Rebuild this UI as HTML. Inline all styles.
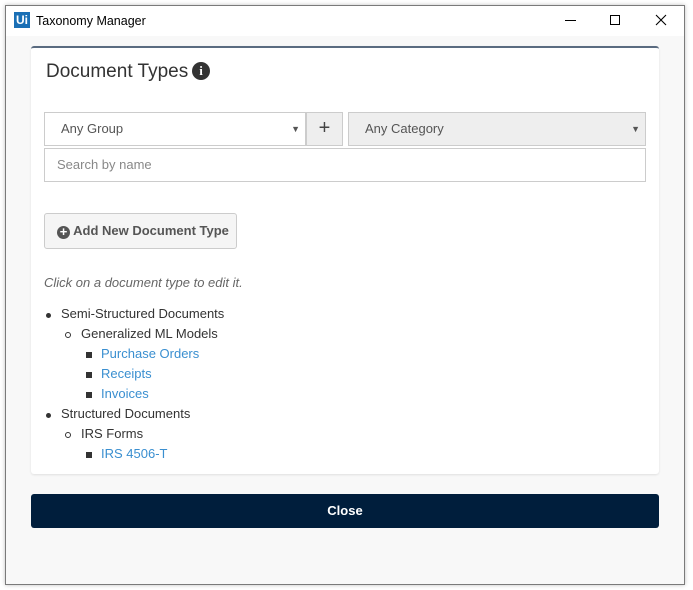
<!DOCTYPE html>
<html><head><style>
*{box-sizing:border-box;margin:0;padding:0}
body{width:693px;height:590px;background:#fff;position:relative;font-family:"Liberation Sans",sans-serif;overflow:hidden}
.win{position:absolute;left:5px;top:5px;width:680px;height:580px;border:1px solid #7a7a7a;background:#f8f8f8;box-shadow:0 0 4px rgba(0,0,0,.25)}
.title{position:absolute;left:0;top:0;width:678px;height:30px;background:#fff}
.logo{position:absolute;left:8px;top:6px;width:16px;height:16px;background:#1a6fb5;color:#fff;font-size:12px;font-weight:bold;line-height:16px;text-align:center}
.ttext{position:absolute;left:30px;top:8px;font-size:12.5px;color:#000}
.card{position:absolute;left:25px;top:40px;width:628px;height:428px;background:#fff;border-top:2px solid #5a6b80;border-radius:3px;box-shadow:0 1px 2px rgba(0,0,0,.1)}
.abs{position:absolute}
.inp{border:1px solid #ccc;font-size:13px;color:#555;padding-left:16px;line-height:32px}
.list{font-size:13px;color:#222;line-height:20px}
.a{color:#3a8fd0}
.sq{position:absolute;width:6px;height:6px;background:#333}
.h{color:#333}
</style></head><body>
<div class="win">
 <div class="title"><div class="logo">Ui</div><div class="ttext">Taxonomy Manager</div>
  <div class="abs" style="left:559px;top:14px;width:11px;height:1px;background:#000"></div>
  <div class="abs" style="left:604px;top:9px;width:10px;height:10px;border:1px solid #000"></div>
  <svg class="abs" style="left:649px;top:8px" width="12" height="12"><path d="M1 1L11 11M11 1L1 11" stroke="#000" stroke-width="1.1"/></svg>
 </div>
 <div class="card">
  <div class="abs" style="left:15px;top:13px;font-size:19px;color:#333">Document Types</div>
  <div class="abs" style="left:161px;top:14px;width:18px;height:18px;border-radius:50%;background:#333;color:#fff;font:bold 13px 'Liberation Serif',serif;text-align:center;line-height:18px">i</div>
  <div class="abs inp" style="left:13px;top:64px;width:262px;height:34px">Any Group<span class="abs" style="right:5px;top:0;font-size:9px;color:#555">▼</span></div>
  <div class="abs" style="left:275px;top:64px;width:37px;height:34px;border:1px solid #ccc;background:#eee;font-size:20px;color:#444;text-align:center;line-height:30px">+</div>
  <div class="abs inp" style="left:317px;top:64px;width:298px;height:34px;background:#eee">Any Category<span class="abs" style="right:5px;top:0;font-size:9px;color:#555">▼</span></div>
  <div class="abs inp" style="left:13px;top:100px;width:602px;height:34px;color:#888;padding-left:12px">Search by name</div>
  <div class="abs" style="left:13px;top:165px;width:193px;height:36px;border:1px solid #ccc;border-radius:3px;background:#f5f5f5;font-size:13px;font-weight:bold;color:#555;line-height:34px;padding-left:12px"><span style="display:inline-block;width:13px;height:13px;border-radius:50%;background:#555;color:#fff;font-size:13px;line-height:12px;text-align:center;vertical-align:-1px">+</span> Add New Document Type</div>
  <div class="abs" style="left:13px;top:227px;font-size:13px;font-style:italic;color:#666">Click on a document type to edit it.</div>
  <div class="abs list" style="left:0;top:256px;width:400px;height:160px">
   <div class="abs" style="left:15px;top:9px;width:5px;height:5px;border-radius:50%;background:#333"></div><div class="abs h" style="left:30px;top:0">Semi-Structured Documents</div>
   <div class="abs" style="left:34px;top:28px;width:6px;height:6px;border-radius:50%;border:1px solid #333"></div><div class="abs h" style="left:50px;top:20px">Generalized ML Models</div>
   <div class="sq" style="left:55px;top:48px"></div><div class="abs a" style="left:70px;top:40px">Purchase Orders</div>
   <div class="sq" style="left:55px;top:68px"></div><div class="abs a" style="left:70px;top:60px">Receipts</div>
   <div class="sq" style="left:55px;top:88px"></div><div class="abs a" style="left:70px;top:80px">Invoices</div>
   <div class="abs" style="left:15px;top:109px;width:5px;height:5px;border-radius:50%;background:#333"></div><div class="abs h" style="left:30px;top:100px">Structured Documents</div>
   <div class="abs" style="left:34px;top:128px;width:6px;height:6px;border-radius:50%;border:1px solid #333"></div><div class="abs h" style="left:50px;top:120px">IRS Forms</div>
   <div class="sq" style="left:55px;top:148px"></div><div class="abs a" style="left:70px;top:140px">IRS 4506-T</div>
  </div>
 </div>
 <div class="abs" style="left:25px;top:488px;width:628px;height:34px;background:#001e3c;border-radius:3px;color:#fff;font-size:13px;font-weight:bold;text-align:center;line-height:34px">Close</div>
</div>
</body></html>
